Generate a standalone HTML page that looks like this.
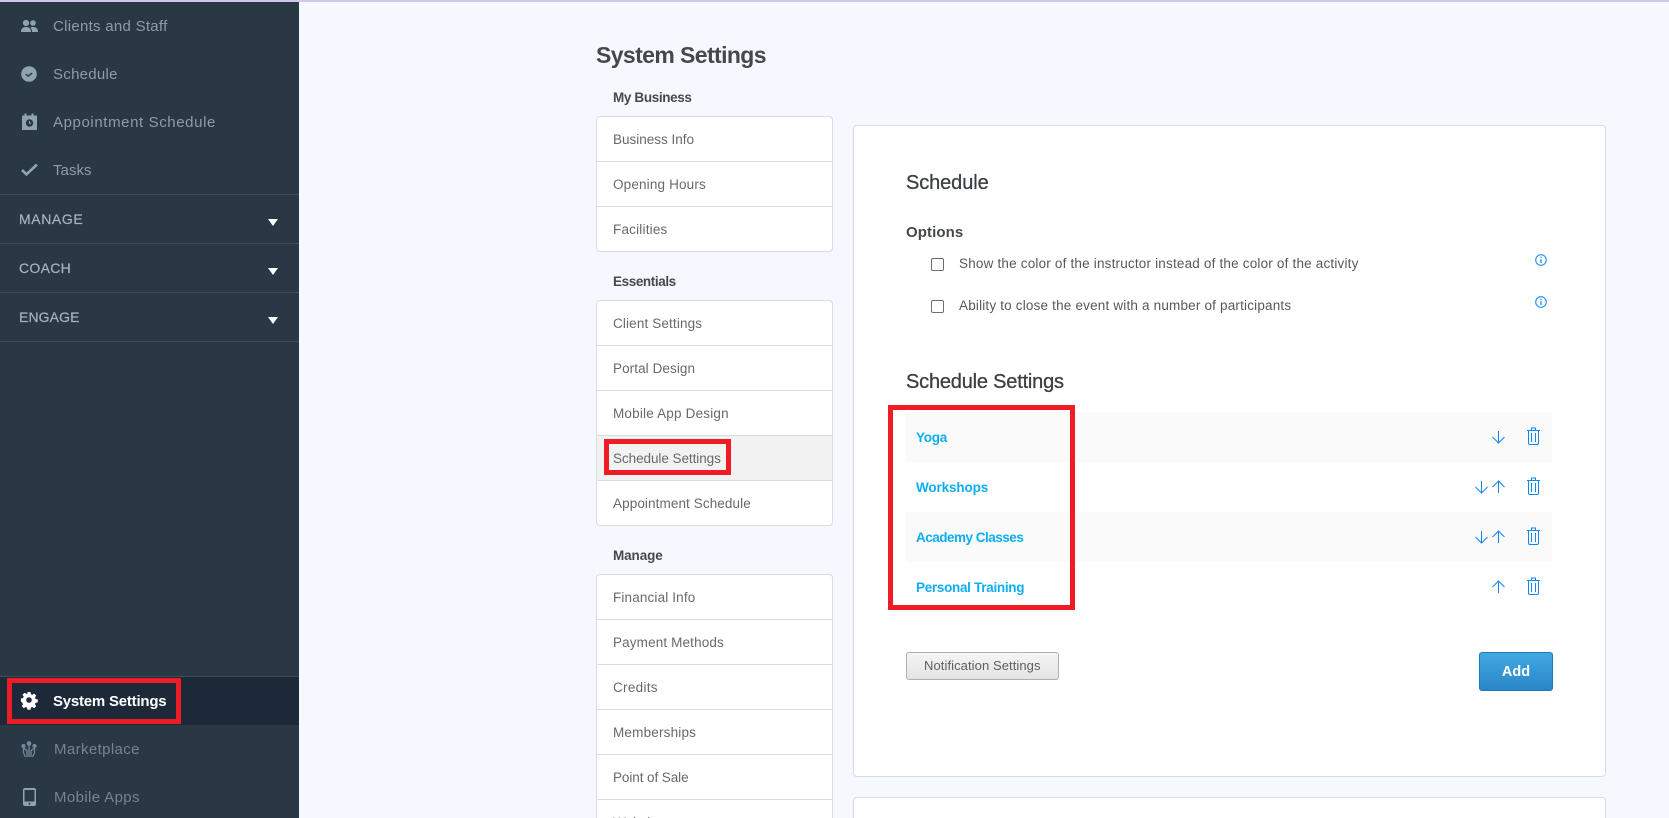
<!DOCTYPE html>
<html lang="en">
<head>
<meta charset="utf-8">
<title>System Settings</title>
<style>
html,body{margin:0;padding:0;width:1669px;height:818px;overflow:hidden}
body{background:#f5f8ff;font-family:"Liberation Sans",Arial,sans-serif;}
#p{position:absolute;left:0;top:0;width:1669px;height:818px;overflow:hidden;background:#f5f8ff}
.a{position:absolute;box-sizing:border-box}
.t{position:absolute;white-space:nowrap;line-height:20px;height:20px}
#top{left:0;top:0;width:1669px;height:2px;background:#cfc8e9}
#side{left:0;top:2px;width:299px;height:816px;background:#2a3744}
.hr{position:absolute;left:0;width:299px;height:1px;background:#3e4c59}
.s{font-size:15px;color:#8e9ca7;left:53px;letter-spacing:.28px}
.h{font-size:14px;color:#a6b3bc;left:19px;letter-spacing:.1px;-webkit-text-stroke:.2px #a6b3bc}
.tri{position:absolute;left:268px;width:0;height:0;border-left:5px solid transparent;border-right:5px solid transparent;border-top:7px solid #fff}
.red{position:absolute;box-sizing:border-box;border:5px solid #ee1c25;background:transparent}
.list{position:absolute;left:596px;width:237px;background:#fff;border:1px solid #d9dce1;border-radius:4px;box-sizing:border-box}
.li{position:absolute;left:0;width:235px;height:45px;border-bottom:1px solid #d9dce1;box-sizing:border-box}
.g{font-size:13.5px;color:#666a6e;left:613px}
.b{font-size:13.5px;color:#45494d;left:613px;font-weight:bold}
.card{background:#fff;border:1px solid #d9dce1;border-radius:4px}
.row{position:absolute;left:906px;width:646px;height:50px}
.n{font-size:13.5px;font-weight:bold;color:#0eaef0;left:916px}
.cb{position:absolute;left:931px;width:13px;height:13px;border:1px solid #6d6d6d;border-radius:2px;background:#fff;box-sizing:border-box}
svg{position:absolute;overflow:visible}
</style>
</head>
<body>
<div id="p">
<div class="a" id="top"></div>
<div class="a" id="side"></div>

<!-- sidebar icons -->
<svg style="left:21px;top:19px" width="17" height="15" viewBox="0 0 17 15" fill="#8ea4b2"><circle cx="5" cy="4" r="3.1"/><circle cx="12" cy="4" r="2.8"/><path d="M0 13c0-3.5 2-5 5-5s5 1.500 5 5z"/><path d="M11 13c0-2-.6-3.400-1.600-4.500 .7-.4 1.600-.5 2.600-.5 3 0 5 1.400 5 5z"/></svg>
<svg style="left:21px;top:66px" width="16" height="16" viewBox="0 0 16 16"><circle cx="8" cy="8" r="7.800" fill="#8ea4b2"/><path d="M4.700 8.200l2.500 1.900 4-3" fill="none" stroke="#2a3744" stroke-width="1.400"/></svg>
<svg style="left:22px;top:113px" width="15" height="17" viewBox="0 0 15 17"><path d="M0 2.500h2.500V.5h2v2h5V.5h2v2H15V17H0z" fill="#8ea4b2"/><circle cx="7.500" cy="10" r="3.700" fill="#2a3744"/><path d="M7.500 8v2.300h1.800" stroke="#8ea4b2" stroke-width="1" fill="none"/></svg>
<svg style="left:21px;top:163px" width="17" height="13" viewBox="0 0 17 13"><path d="M1 7l4.500 4.300L16 1.500" fill="none" stroke="#8ea4b2" stroke-width="2.600"/></svg>

<div class="t s" style="top:17px">Clients and Staff</div>
<div class="t s" style="top:65px">Schedule</div>
<div class="t s" style="top:113px;letter-spacing:.6px">Appointment Schedule</div>
<div class="t s" style="top:161px;letter-spacing:.05px">Tasks</div>

<div class="hr" style="top:194px"></div>
<div class="t h" style="top:209px;letter-spacing:.6px">MANAGE</div><div class="tri" style="top:219px"></div>
<div class="hr" style="top:243px"></div>
<div class="t h" style="top:258px;letter-spacing:.3px">COACH</div><div class="tri" style="top:268px"></div>
<div class="hr" style="top:292px"></div>
<div class="t h" style="top:307px">ENGAGE</div><div class="tri" style="top:317px"></div>
<div class="hr" style="top:341px"></div>

<div class="hr" style="top:676px"></div>
<div class="a" style="left:0;top:677px;width:299px;height:48px;background:#1d2938"></div>
<svg style="left:21px;top:692px" width="16" height="16" viewBox="0 0 16 16"><path fill="#fff" fill-rule="evenodd" d="M6.500 0h3l.4 2.200 1.400.6 1.900-1.200 2 2.100-1.200 1.800.6 1.500 2.200.4v3l-2.200.4-.6 1.500 1.200 1.800-2 2.100-1.900-1.200-1.400.6-.4 2.200h-3l-.4-2.200-1.400-.6-1.900 1.200-2-2.100 1.200-1.800-.6-1.500L-.1 9.500v-3l2.200-.4.600-1.500L1.500 2.800l2-2.100 1.900 1.200 1.400-.6zM8 5.200a2.800 2.800 0 1 0 0 5.600 2.800 2.800 0 0 0 0-5.600z"/></svg>
<div class="t" style="left:53px;top:692px;font-size:15px;color:#fff;letter-spacing:-.22px;font-weight:bold">System Settings</div>
<svg style="left:21px;top:741px" width="16" height="17" viewBox="0 0 16 17" fill="none" stroke="#71899a" stroke-width="1.300"><circle cx="8" cy="2.500" r="1.700" fill="#71899a"/><circle cx="2.500" cy="5" r="1.500" fill="#71899a"/><circle cx="13.500" cy="5" r="1.500" fill="#71899a"/><path d="M8 4v12M6 16V9.500L3 7.500M10 16V9.500l3-2M2.500 7v5l2 4M13.500 7v5l-2 4"/></svg>
<div class="t s" style="top:740px;color:#75848f;left:54px;letter-spacing:.38px">Marketplace</div>
<svg style="left:23px;top:788px" width="13" height="18" viewBox="0 0 13 18"><rect width="13" height="18" rx="2" fill="#8ea4b2"/><rect x="1.500" y="2" width="10" height="11.500" fill="#2a3744"/><circle cx="6.500" cy="15.700" r="1" fill="#2a3744"/></svg>
<div class="t s" style="top:788px;color:#75848f;left:54px;letter-spacing:.38px">Mobile Apps</div>

<!-- red on sidebar -->
<div class="red" style="left:7px;top:678px;width:174px;height:46px"></div>

<!-- left settings -->
<div class="t" style="left:596px;top:45px;font-size:23px;font-weight:bold;color:#45484b;letter-spacing:-.6px">System Settings</div>

<div class="t b" style="top:88px;letter-spacing:-.36px">My Business</div>
<div class="list" style="top:116px;height:136px">
  <div class="li" style="top:0"></div>
  <div class="li" style="top:45px"></div>
</div>
<div class="t g" style="top:130px">Business Info</div>
<div class="t g" style="top:175px;letter-spacing:.16px">Opening Hours</div>
<div class="t g" style="top:220px;letter-spacing:.2px">Facilities</div>

<div class="t b" style="top:272px;letter-spacing:-.4px">Essentials</div>
<div class="list" style="top:300px;height:226px">
  <div class="li" style="top:0"></div>
  <div class="li" style="top:45px"></div>
  <div class="li" style="top:90px"></div>
  <div class="li" style="top:135px;background:#f2f2f2"></div>
</div>
<div class="t g" style="top:314px;letter-spacing:.14px">Client Settings</div>
<div class="t g" style="top:359px;letter-spacing:.08px">Portal Design</div>
<div class="t g" style="top:404px;letter-spacing:.19px">Mobile App Design</div>
<div class="t g" style="top:449px;letter-spacing:-.06px">Schedule Settings</div>
<div class="t g" style="top:494px;letter-spacing:.1px">Appointment Schedule</div>
<div class="red" style="left:604px;top:439px;width:127px;height:36px"></div>

<div class="t b" style="top:546px;letter-spacing:-.1px">Manage</div>
<div class="list" style="top:574px;height:260px">
  <div class="li" style="top:0"></div>
  <div class="li" style="top:45px"></div>
  <div class="li" style="top:90px"></div>
  <div class="li" style="top:135px"></div>
  <div class="li" style="top:180px"></div>
</div>
<div class="t g" style="top:588px;letter-spacing:.15px">Financial Info</div>
<div class="t g" style="top:633px;letter-spacing:.14px">Payment Methods</div>
<div class="t g" style="top:678px;letter-spacing:.3px">Credits</div>
<div class="t g" style="top:723px;letter-spacing:.19px">Memberships</div>
<div class="t g" style="top:768px;letter-spacing:-.08px">Point of Sale</div>
<div class="t g" style="top:813px">Website</div>

<!-- main card -->
<div class="a card" style="left:853px;top:125px;width:753px;height:652px"></div>
<div class="a card" style="left:853px;top:797px;width:753px;height:40px"></div>

<div class="t" style="left:906px;top:173px;font-size:20px;color:#3c3f42;letter-spacing:-.1px;-webkit-text-stroke:.3px #3c3f42">Schedule</div>
<div class="t" style="left:906px;top:223px;font-size:15px;font-weight:bold;color:#45484b;letter-spacing:.1px">Options</div>

<div class="cb" style="top:258px"></div>
<div class="t g" style="left:959px;top:254px;color:#55595d;letter-spacing:.19px">Show the color of the instructor instead of the color of the activity</div>
<div class="cb" style="top:300px"></div>
<div class="t g" style="left:959px;top:296px;color:#55595d;letter-spacing:.185px">Ability to close the event with a number of participants</div>

<svg style="left:1535px;top:254px" width="12" height="12" viewBox="0 0 12 12"><circle cx="6" cy="6" r="5.300" fill="none" stroke="#1f8fff" stroke-width="1.100"/><path d="M6 5.200v3.800M6 2.800v1.200" stroke="#1f8fff" stroke-width="1.300"/></svg>
<svg style="left:1535px;top:296px" width="12" height="12" viewBox="0 0 12 12"><circle cx="6" cy="6" r="5.300" fill="none" stroke="#1f8fff" stroke-width="1.100"/><path d="M6 5.200v3.800M6 2.800v1.200" stroke="#1f8fff" stroke-width="1.300"/></svg>

<div class="t" style="left:906px;top:372px;font-size:20px;color:#3c3f42;letter-spacing:-.2px;-webkit-text-stroke:.3px #3c3f42">Schedule Settings</div>

<div class="row" style="top:412px;background:#fafafa"></div>
<div class="row" style="top:512px;background:#fafafa"></div>
<div class="t n" style="top:428px;letter-spacing:-.25px">Yoga</div>
<div class="t n" style="top:478px;letter-spacing:-.12px">Workshops</div>
<div class="t n" style="top:528px;letter-spacing:-.5px">Academy Classes</div>
<div class="t n" style="top:578px;letter-spacing:-.3px">Personal Training</div>

<!-- arrows and trash -->
<svg style="left:0;top:0" width="1669" height="818" fill="none" stroke="#0f86f5" stroke-width="1">
  <path d="M1498.500 431v12M1492.500 437l6 6 6-6"/>
  <path d="M1481.500 481v12M1475.500 487l6 6 6-6"/>
  <path d="M1498.500 493v-12M1492.500 487l6-6 6 6"/>
  <path d="M1481.500 531v12M1475.500 537l6 6 6-6"/>
  <path d="M1498.500 543v-12M1492.500 537l6-6 6 6"/>
  <path d="M1498.500 593v-12M1492.500 587l6-6 6 6"/>
  <path d="M1527 430.500h13M1531.500 430.500v-2.500h4v2.500M1528.500 430.500v12.500q0 1.500 1.500 1.500h7q1.500 0 1.500-1.500V430.500M1531.500 433v9M1535.500 433v9"/>
  <path d="M1527 480.500h13M1531.500 480.500v-2.500h4v2.500M1528.500 480.500v12.500q0 1.500 1.500 1.500h7q1.500 0 1.500-1.500V480.500M1531.500 483v9M1535.500 483v9"/>
  <path d="M1527 530.500h13M1531.500 530.500v-2.500h4v2.500M1528.500 530.500v12.500q0 1.500 1.500 1.500h7q1.500 0 1.500-1.500V530.500M1531.500 533v9M1535.500 533v9"/>
  <path d="M1527 580.500h13M1531.500 580.500v-2.500h4v2.500M1528.500 580.500v12.500q0 1.500 1.500 1.500h7q1.500 0 1.500-1.500V580.500M1531.500 583v9M1535.500 583v9"/>
</svg>

<div class="red" style="left:888px;top:405px;width:187px;height:205px"></div>

<!-- buttons -->
<div class="a" style="left:906px;top:652px;width:153px;height:28px;border:1px solid #b0b0b0;border-radius:3px;background:linear-gradient(#f5f5f5,#e4e4e4)"></div>
<div class="t" style="left:924px;top:656px;font-size:13px;color:#5c6064;letter-spacing:.08px">Notification Settings</div>
<div class="a" style="left:1479px;top:652px;width:74px;height:39px;border:1px solid #1f78b8;border-radius:3px;background:linear-gradient(#41aae1,#2b85c9)"></div>
<div class="t" style="left:1479px;width:74px;text-align:center;top:662px;font-size:14.500px;font-weight:bold;color:#fff">Add</div>
</div>
</body>
</html>
